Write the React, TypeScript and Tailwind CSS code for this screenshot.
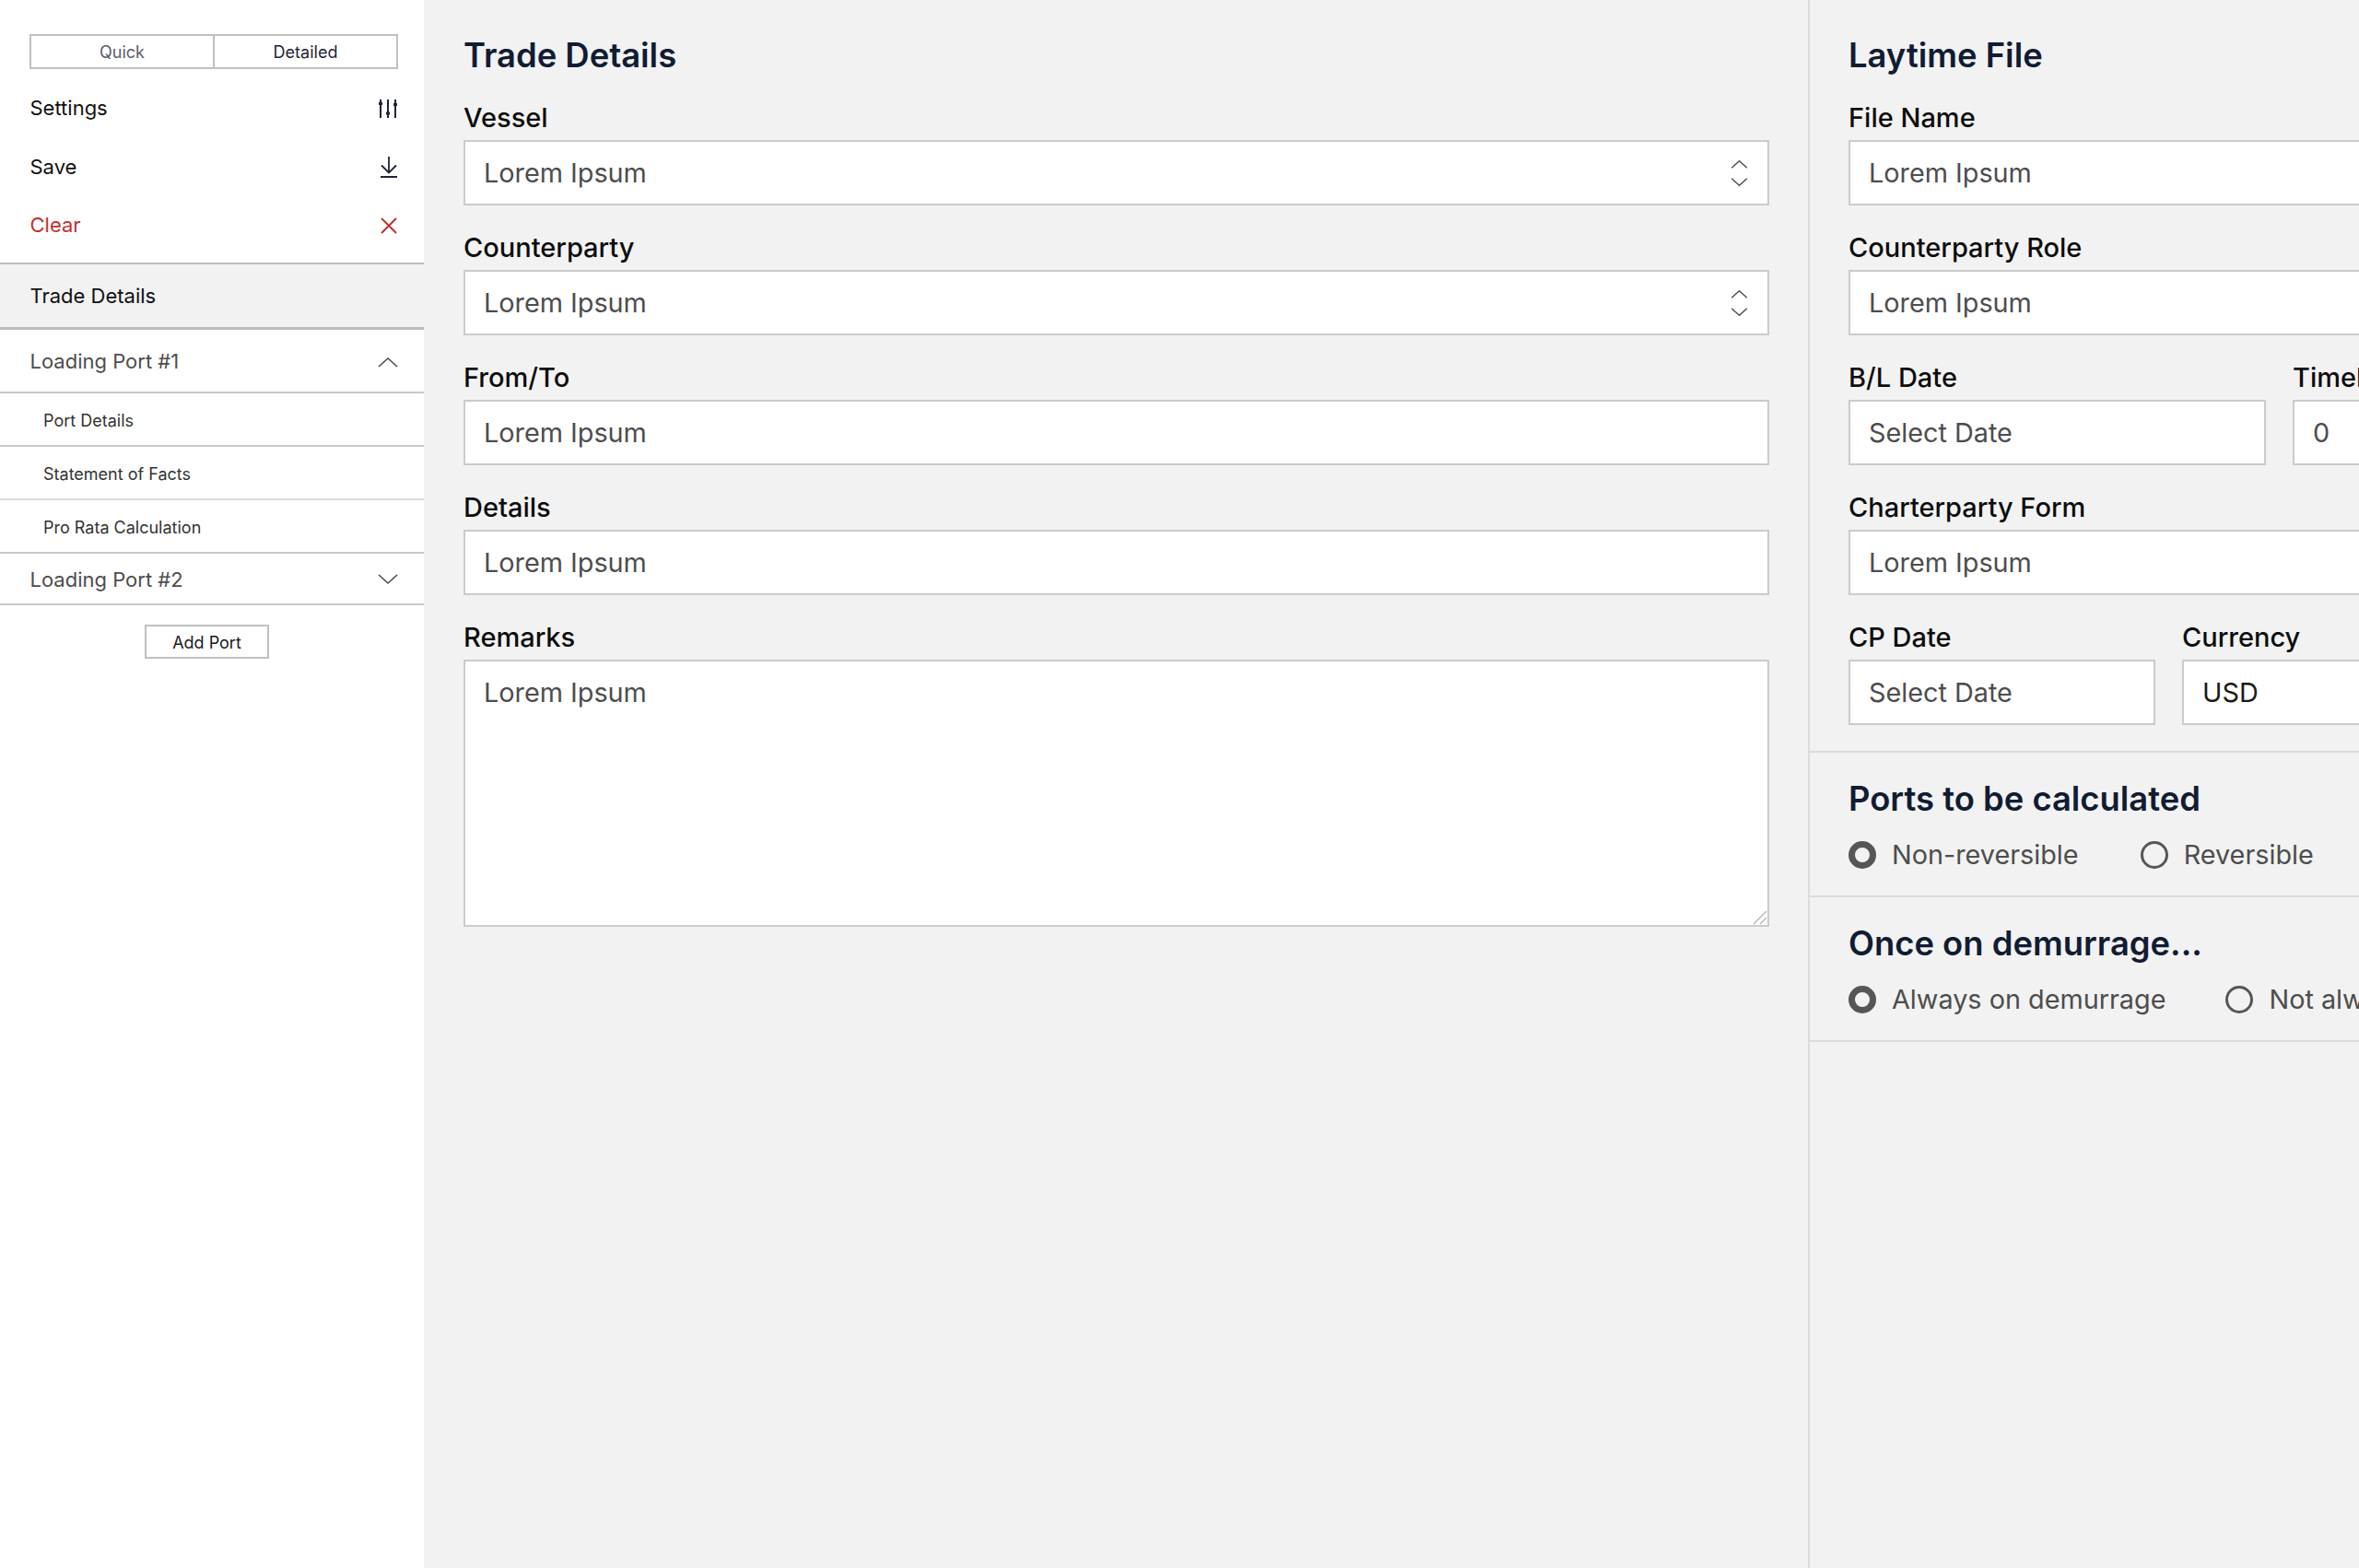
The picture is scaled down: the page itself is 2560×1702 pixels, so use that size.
import React from "react";

const Chevron = ({ up, className }: { up?: boolean; className: string }) => (
  <svg viewBox="0 0 22 12" fill="none" stroke="currentColor" strokeWidth="1.6" className={className}>
    <path d={up ? "M1 11 11 2l10 9" : "M1 1l10 9 10-9"} />
  </svg>
);

const Field = ({ label, value, select, dark, className = "" }: { label: string; value: string; select?: boolean; dark?: boolean; className?: string }) => (
  <div className={`flex flex-col ${className}`}>
    <div className="h-[36px] text-[29px] leading-[36px] font-medium text-[#0d0d0d] whitespace-nowrap">{label}</div>
    <div className="mt-[6px] h-[71px] flex items-center justify-between bg-white border-2 border-[#cbcbcb] pl-[20px] pr-[20px]">
      <span className={`text-[28.8px] leading-[36px] whitespace-nowrap ${dark ? "text-[#1a1a1a]" : "text-[#4d4d4d]"}`}>{value}</span>
      {select && (
        <span className="flex flex-col gap-[10px] text-[#4a4a4a]">
          <Chevron up className="w-[21px] h-[10px]" />
          <Chevron className="w-[21px] h-[10px]" />
        </span>
      )}
    </div>
  </div>
);

const Radio = ({ label, on }: { label: string; on?: boolean }) => (
  <div className="flex items-center gap-[17px] whitespace-nowrap">
    <span className={`w-[30px] h-[30px] rounded-full flex-none ${on ? "border-[7px] border-[#565656]" : "border-[3px] border-[#565656]"}`} />
    <span className="text-[28.8px] leading-[36px] text-[#4d4d4d]">{label}</span>
  </div>
);

const MenuRow = ({ label, color, children }: { label: string; color: string; children: React.ReactNode }) => (
  <div className={`h-[63.5px] flex items-center justify-between text-[22px] ${color}`}>
    <span>{label}</span>
    {children}
  </div>
);

const SubRow = ({ label, className }: { label: string; className: string }) => (
  <div className={`flex items-center pl-[47px] pt-[2px] text-[18px] text-[#333333] border-b-2 ${className}`}>{label}</div>
);

const PortRow = ({ label, up, className }: { label: string; up?: boolean; className: string }) => (
  <div className={`flex items-center justify-between pl-[32.5px] pr-[28px] pt-[2px] text-[22px] text-[#4d4d4d] border-b-2 border-[#c8c8c8] ${className}`}>
    <span>{label}</span>
    <Chevron up={up} className="w-[22px] h-[12px]" />
  </div>
);

export default function App() {
  return (
    <div className="w-[2560px] h-[1702px] overflow-hidden flex bg-[#f2f2f2] font-['Inter',sans-serif]">
      <aside className="w-[460px] flex-none bg-white flex flex-col">
        <div className="pl-[32px] pr-[28px] pt-[37px] h-[287px] border-b-2 border-[#bdbdbd] flex-none">
          <div className="w-[400px] h-[38px] flex border-2 border-[#c0c0c0] text-[18px]">
            <div className="w-[199px] flex items-center justify-center text-[#5b5b6b] border-r-2 border-[#c0c0c0]">Quick</div>
            <div className="flex-1 flex items-center justify-center text-[#1f2437]">Detailed</div>
          </div>
          <div className="mt-[11px] pl-[0.5px]">
            <MenuRow label="Settings" color="text-[#111111]">
              <svg viewBox="0 0 22 22" className="w-[22px] h-[22px] text-[#1f2437]" fill="none" stroke="currentColor" strokeWidth="2">
                <path d="M3 1v20M11 1v20M19 1v20" />
                <path d="M1 5.5h4M9 16h4M17 6.5h4" strokeWidth="3" />
              </svg>
            </MenuRow>
            <MenuRow label="Save" color="text-[#111111]">
              <svg viewBox="0 0 20 24" className="w-[20px] h-[24px] text-[#1f2437]" fill="none" stroke="currentColor" strokeWidth="1.8">
                <path d="M10 1v17M2 10.5l8 8 8-8M1 23h18" />
              </svg>
            </MenuRow>
            <MenuRow label="Clear" color="text-[#c0322e]">
              <svg viewBox="0 0 20 20" className="w-[20px] h-[20px] text-[#c0322e]" fill="none" stroke="currentColor" strokeWidth="2">
                <path d="M2 2l16 16M18 2 2 18" />
              </svg>
            </MenuRow>
          </div>
        </div>
        <div className="h-[71px] flex-none flex items-center pl-[32.5px] bg-[#f2f2f2] text-[22px] text-[#111111] border-b-[3px] border-[#bdbdbd]">Trade Details</div>
        <PortRow label="Loading Port #1" up className="h-[69px] flex-none" />
        <SubRow label="Port Details" className="h-[58px] border-[#c8c8c8] flex-none" />
        <SubRow label="Statement of Facts" className="h-[58px] border-[#dddddd] flex-none" />
        <SubRow label="Pro Rata Calculation" className="h-[58px] border-[#c8c8c8] flex-none" />
        <PortRow label="Loading Port #2" className="h-[56px] flex-none" />
        <div className="flex justify-center pt-[21px] pr-[11px]">
          <div className="w-[135px] h-[37px] flex items-center justify-center pt-[1px] border-2 border-[#c0c0c0] text-[18px] text-[#1a1a1a]">Add Port</div>
        </div>
      </aside>

      <main className="w-[1502px] flex-none pl-[43px] pr-[42px] pt-[37px]">
        <h1 className="text-[36.4px] leading-[46px] font-semibold text-[#111c33]">Trade Details</h1>
        <div className="mt-[27px] flex flex-col gap-[28px]">
          <Field label="Vessel" value="Lorem Ipsum" select />
          <Field label="Counterparty" value="Lorem Ipsum" select />
          <Field label="From/To" value="Lorem Ipsum" />
          <Field label="Details" value="Lorem Ipsum" />
          <div className="flex flex-col">
            <div className="h-[36px] text-[29px] leading-[36px] font-medium text-[#0d0d0d]">Remarks</div>
            <div className="relative mt-[6px] h-[290px] bg-white border-2 border-[#cbcbcb] pl-[20px] pt-[16px] text-[28.8px] leading-[36px] text-[#4d4d4d]">
              Lorem Ipsum
              <svg viewBox="0 0 16 16" className="absolute right-0 bottom-0 w-[16px] h-[16px] text-[#b5b5b5]" fill="none" stroke="currentColor" strokeWidth="1.4">
                <path d="M1 15 15 1M8 15l7-7" />
              </svg>
            </div>
          </div>
        </div>
      </main>

      <section className="w-[800px] flex-none border-l-2 border-[#dcdcdc]">
        <div className="pl-[42px] pt-[37px] h-[817px] border-b-2 border-[#dcdcdc]">
          <h2 className="text-[36.4px] leading-[46px] font-semibold text-[#111c33]">Laytime File</h2>
          <div className="mt-[27px] flex flex-col gap-[28px]">
            <Field label="File Name" value="Lorem Ipsum" className="w-[700px]" />
            <Field label="Counterparty Role" value="Lorem Ipsum" className="w-[700px]" />
            <div className="flex gap-[29px]">
              <Field label="B/L Date" value="Select Date" className="w-[453px]" />
              <Field label="Timeline" value="0" className="w-[218px]" />
            </div>
            <Field label="Charterparty Form" value="Lorem Ipsum" className="w-[700px]" />
            <div className="flex gap-[29px]">
              <Field label="CP Date" value="Select Date" className="w-[333px]" />
              <Field label="Currency" value="USD" dark className="w-[338px]" />
            </div>
          </div>
        </div>
        <div className="pl-[42px] pt-[27px] h-[157px] border-b-2 border-[#dcdcdc]">
          <h2 className="text-[36.4px] leading-[46px] font-semibold text-[#111c33]">Ports to be calculated</h2>
          <div className="mt-[20px] flex gap-[67px]">
            <Radio label="Non-reversible" on />
            <Radio label="Reversible" />
          </div>
        </div>
        <div className="pl-[42px] pt-[27px] h-[157px] border-b-2 border-[#dcdcdc]">
          <h2 className="text-[36.4px] leading-[46px] font-semibold text-[#111c33]">Once on demurrage...</h2>
          <div className="mt-[20px] flex gap-[65px]">
            <Radio label="Always on demurrage" on />
            <Radio label="Not always on demurrage" />
          </div>
        </div>
      </section>
    </div>
  );
}
